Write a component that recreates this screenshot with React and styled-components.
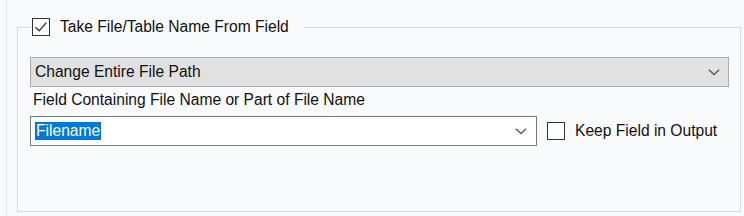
import React from 'react'
import styled, { createGlobalStyle } from 'styled-components'

const GlobalStyle = createGlobalStyle`
	html, body {
		margin: 0;
		padding: 0;
		background: #f9fafc;
	}
	body {
		font-family: "Liberation Sans", Arial, sans-serif;
		font-size: 15.6px;
		color: #111;
	}
`

const Chevron = ({ color = '#5a5a5a' }) =>
	<svg width="12" height="7" viewBox="0 0 12 7">
		<path d="M0.8 0.8 L6 5.6 L11.2 0.8" fill="none" stroke={color} strokeWidth="1.4" />
	</svg>

const Check = ({ checked }) =>
	<Box>
		{checked &&
			<svg width="16" height="16" viewBox="0 0 16 16">
				<path d="M2.5 8.2 L6.2 11.8 L13.4 3.6" fill="none" stroke="#3a3a3a" strokeWidth="1.4" />
			</svg>}
	</Box>

const App = () =>
	<>
		<GlobalStyle />
		<Page>
			<Panel>
				<Group>
					<Legend>
						<Check checked />
						<span>Take File/Table Name From Field</span>
					</Legend>
					<Select>
						<span>Change Entire File Path</span>
						<Chevron />
					</Select>
					<Label>Field Containing File Name or Part of File Name</Label>
					<Row>
						<Combo>
							<Selected>Filename</Selected>
							<Chevron />
						</Combo>
						<CheckLabel>
							<Check />
							<span>Keep Field in Output</span>
						</CheckLabel>
					</Row>
				</Group>
			</Panel>
		</Page>
	</>

const Page = styled.div`
	height: 216px;
	padding-left: 6px;
	display: flex;
	box-sizing: border-box;
`
const Panel = styled.div`
	flex: 1;
	display: flex;
	flex-direction: column;
	border-left: 1px solid #dfe5ee;
	padding: 17px 3px 4px 10px;
`
const Group = styled.fieldset`
	flex: 1;
	margin: 0;
	min-width: 0;
	padding: 0 11px 0 12px;
	border: 1px solid #d8d8d8;
	box-shadow: inset 1px 1px 0 #fff;
`
const Legend = styled.legend`
	display: flex;
	align-items: center;
	gap: 10px;
	height: 20px;
	padding: 0 15px 0 2px;
	margin-left: 0;
	line-height: 20px;
	color: #111;
`
const Box = styled.span`
	width: 16px;
	height: 16px;
	border: 1px solid #333;
	background: #fff;
	display: flex;
	align-items: center;
	justify-content: center;
	flex: none;
`
const Select = styled.div`
	margin-top: 20px;
	height: 30px;
	box-sizing: border-box;
	border: 1px solid #adadad;
	background: #e1e1e1;
	display: flex;
	align-items: center;
	justify-content: space-between;
	padding: 0 8px 0 4px;
`
const Label = styled.div`
	margin-top: 3px;
	height: 20px;
	line-height: 20px;
	padding-left: 3px;
`
const Row = styled.div`
	margin-top: 6px;
	display: flex;
	align-items: center;
`
const Combo = styled.div`
	width: 507px;
	height: 30px;
	box-sizing: border-box;
	border: 1px solid #7a7a7a;
	background: #fff;
	display: flex;
	align-items: center;
	justify-content: space-between;
	padding: 0 9px 0 4px;
`
const Selected = styled.span`
	background: #0078d7;
	color: #fff;
	line-height: 18px;
	padding: 0 1px;
`
const CheckLabel = styled.label`
	margin-left: 10px;
	display: flex;
	align-items: center;
	gap: 10px;
`

export default App
